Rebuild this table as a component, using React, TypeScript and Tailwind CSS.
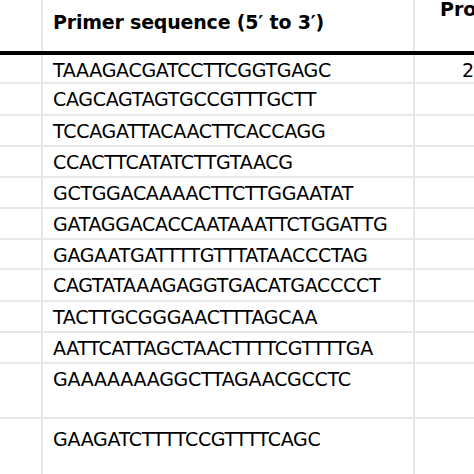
const rows = [
  { seq: "TAAAGACGATCCTTCGGTGAGC", h: "h-[29px]", size: "2" },
  { seq: "CAGCAGTAGTGCCGTTTGCTT", h: "h-[32px]" },
  { seq: "TCCAGATTACAACTTCACCAGG", h: "h-[31px]" },
  { seq: "CCACTTCATATCTTGTAACG", h: "h-[31px]" },
  { seq: "GCTGGACAAAACTTCTTGGAATAT", h: "h-[31px]" },
  { seq: "GATAGGACACCAATAAATTCTGGATTG", h: "h-[31px]" },
  { seq: "GAGAATGATTTTGTTTATAACCCTAG", h: "h-[30px]" },
  { seq: "CAGTATAAAGAGGTGACATGACCCCT", h: "h-[32px]" },
  { seq: "TACTTGCGGGAACTTTAGCAA", h: "h-[31px]" },
  { seq: "AATTCATTAGCTAACTTTTCGTTTTGA", h: "h-[31px]" },
  { seq: "GAAAAAAAGGCTTAGAACGCCTC", h: "h-[55px]" },
];

export default function App() {
  return (
    <div className="w-[474px] h-[474px] overflow-hidden bg-white text-black font-['DejaVu_Sans',sans-serif]">
      {/* header */}
      <div className="flex h-[51px]">
        <div className="w-[43px] shrink-0 border-r-2 border-[#e8e8e8]" />
        <div className="w-[372px] shrink-0 border-r-2 border-[#e8e8e8] pl-[10px] pt-[13px] text-[19px] leading-[19px] font-bold tracking-[-0.2px] whitespace-nowrap">
          Primer sequence (5′ to 3′)
        </div>
        <div className="flex-1 overflow-hidden pl-[25px] text-[19px] leading-[19px] font-bold whitespace-nowrap">
          Pro
        </div>
      </div>
      <div className="h-[4px] bg-black" />

      {/* body */}
      {rows.map((r, i) => (
        <div key={i} className={`flex ${r.h} border-b-2 border-[#e8e8e8]`}>
          <div className="w-[43px] shrink-0 border-r-2 border-[#e8e8e8]" />
          <div className="w-[372px] shrink-0 border-r-2 border-[#e8e8e8] pl-[10px] pt-[6px] text-[19px] leading-[19px] tracking-[-0.3px] whitespace-nowrap">
            {r.seq}
          </div>
          <div className="flex-1 pl-[47px] pt-[6px] text-[19px] leading-[19px] whitespace-nowrap">
            {r.size ?? ""}
          </div>
        </div>
      ))}
      <div className="flex h-[60px]">
        <div className="w-[43px] shrink-0 border-r-2 border-[#e8e8e8]" />
        <div className="w-[372px] shrink-0 border-r-2 border-[#e8e8e8] pl-[10px] pt-[11px] text-[19px] leading-[19px] tracking-[-0.3px] whitespace-nowrap">
          GAAGATCTTTTCCGTTTTCAGC
        </div>
        <div className="flex-1" />
      </div>
    </div>
  );
}
